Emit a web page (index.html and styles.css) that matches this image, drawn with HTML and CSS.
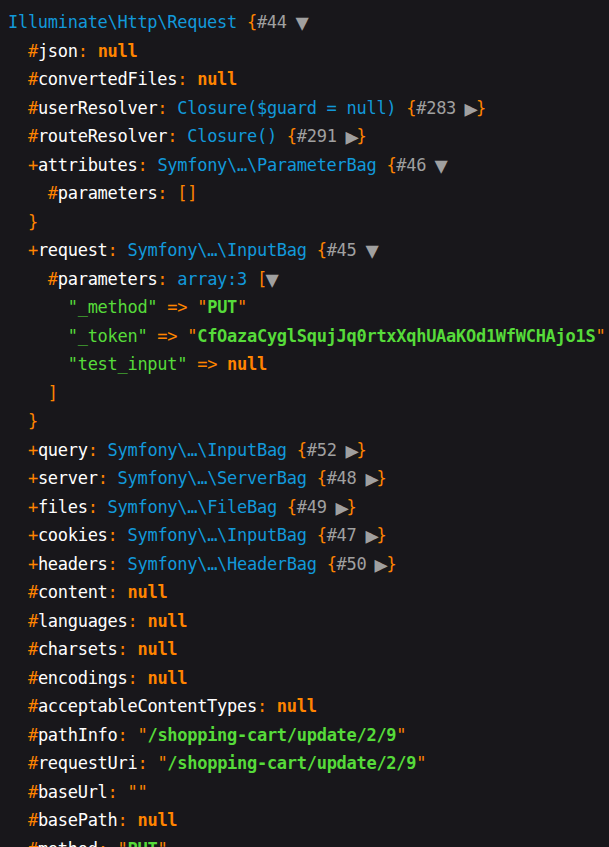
FILE: index.html
```html
<!DOCTYPE html>
<html>
<head>
<meta charset="utf-8">
<link rel="stylesheet" href="styles.css">
</head>
<body>
<pre class="dump"><span class="note">Illuminate\Http\Request</span> <span class="p">{</span><span class="ref">#44</span> <span class="tg">▼</span>
  <span class="p">#</span><span class="prop">json</span><span class="p">:</span> <span class="const">null</span>
  <span class="p">#</span><span class="prop">convertedFiles</span><span class="p">:</span> <span class="const">null</span>
  <span class="p">#</span><span class="prop">userResolver</span><span class="p">:</span> <span class="note">Closure($guard = null)</span> <span class="p">{</span><span class="ref">#283</span> <span class="tg">▶</span><span class="p">}</span>
  <span class="p">#</span><span class="prop">routeResolver</span><span class="p">:</span> <span class="note">Closure()</span> <span class="p">{</span><span class="ref">#291</span> <span class="tg">▶</span><span class="p">}</span>
  <span class="p">+</span><span class="prop">attributes</span><span class="p">:</span> <span class="note">Symfony\…\ParameterBag</span> <span class="p">{</span><span class="ref">#46</span> <span class="tg">▼</span>
    <span class="p">#</span><span class="prop">parameters</span><span class="p">: []</span>
  <span class="p">}</span>
  <span class="p">+</span><span class="prop">request</span><span class="p">:</span> <span class="note">Symfony\…\InputBag</span> <span class="p">{</span><span class="ref">#45</span> <span class="tg">▼</span>
    <span class="p">#</span><span class="prop">parameters</span><span class="p">:</span> <span class="note">array:3</span> <span class="p">[</span><span class="tg">▼</span>
      <span class="key">"_method"</span> <span class="p">=&gt;</span> <span class="p">"</span><span class="str">PUT</span><span class="p">"</span>
      <span class="key">"_token"</span> <span class="p">=&gt;</span> <span class="p">"</span><span class="str">CfOazaCyglSqujJq0rtxXqhUAaKOd1WfWCHAjo1S</span><span class="p">"</span>
      <span class="key">"test_input"</span> <span class="p">=&gt;</span> <span class="const">null</span>
    <span class="p">]</span>
  <span class="p">}</span>
  <span class="p">+</span><span class="prop">query</span><span class="p">:</span> <span class="note">Symfony\…\InputBag</span> <span class="p">{</span><span class="ref">#52</span> <span class="tg">▶</span><span class="p">}</span>
  <span class="p">+</span><span class="prop">server</span><span class="p">:</span> <span class="note">Symfony\…\ServerBag</span> <span class="p">{</span><span class="ref">#48</span> <span class="tg">▶</span><span class="p">}</span>
  <span class="p">+</span><span class="prop">files</span><span class="p">:</span> <span class="note">Symfony\…\FileBag</span> <span class="p">{</span><span class="ref">#49</span> <span class="tg">▶</span><span class="p">}</span>
  <span class="p">+</span><span class="prop">cookies</span><span class="p">:</span> <span class="note">Symfony\…\InputBag</span> <span class="p">{</span><span class="ref">#47</span> <span class="tg">▶</span><span class="p">}</span>
  <span class="p">+</span><span class="prop">headers</span><span class="p">:</span> <span class="note">Symfony\…\HeaderBag</span> <span class="p">{</span><span class="ref">#50</span> <span class="tg">▶</span><span class="p">}</span>
  <span class="p">#</span><span class="prop">content</span><span class="p">:</span> <span class="const">null</span>
  <span class="p">#</span><span class="prop">languages</span><span class="p">:</span> <span class="const">null</span>
  <span class="p">#</span><span class="prop">charsets</span><span class="p">:</span> <span class="const">null</span>
  <span class="p">#</span><span class="prop">encodings</span><span class="p">:</span> <span class="const">null</span>
  <span class="p">#</span><span class="prop">acceptableContentTypes</span><span class="p">:</span> <span class="const">null</span>
  <span class="p">#</span><span class="prop">pathInfo</span><span class="p">:</span> <span class="p">"</span><span class="str">/shopping-cart/update/2/9</span><span class="p">"</span>
  <span class="p">#</span><span class="prop">requestUri</span><span class="p">:</span> <span class="p">"</span><span class="str">/shopping-cart/update/2/9</span><span class="p">"</span>
  <span class="p">#</span><span class="prop">baseUrl</span><span class="p">: ""</span>
  <span class="p">#</span><span class="prop">basePath</span><span class="p">:</span> <span class="const">null</span>
  <span class="p">#</span><span class="prop">method</span><span class="p">:</span> <span class="p">"</span><span class="str">PUT</span><span class="p">"</span></pre>
</body>
</html>
```

FILE: styles.css
```css
html, body {
  margin: 0;
  padding: 0;
  background: #18171b;
  overflow: hidden;
}
.dump {
  margin: 0;
  padding: 8px 0 0 8px;
  font-family: "DejaVu Sans Mono", "Liberation Mono", monospace;
  font-size: 17px;
  letter-spacing: -0.28px;
  line-height: 28.5px;
  color: #ff8400;
  white-space: pre;
}
.p { color: #ff8400; }
.prop { color: #ffffff; }
.note { color: #1299da; }
.ref { color: #a0a0a0; }
.tg {
  display: inline-block;
  color: #a0a0a0;
  font-size: 17px;
  line-height: 0;
  transform: scale(1.3);
  transform-origin: 50% 70%;
}
.const { color: #ff8400; font-weight: bold; }
.str { color: #56db3a; font-weight: bold; }
.key { color: #56db3a; }
```
